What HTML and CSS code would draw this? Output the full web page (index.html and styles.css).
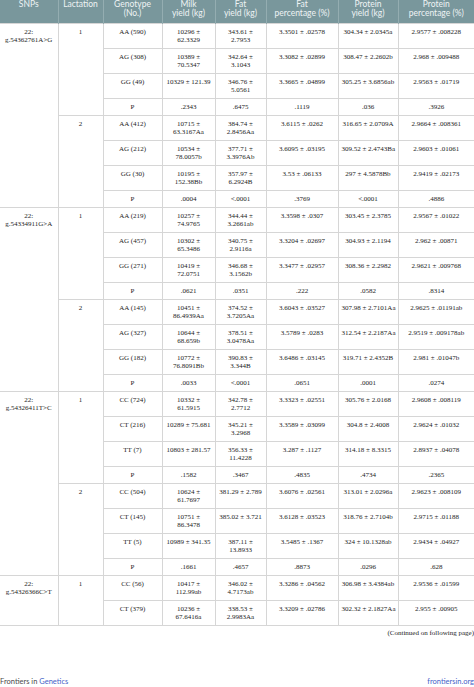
FILE: index.html
```html
<!DOCTYPE html>
<html>
<head>
<meta charset="utf-8">
<link rel="stylesheet" href="styles.css">
</head>
<body>
<div class="page">
<table class="tbl">
<colgroup>
<col class="c-snp"><col class="c-lac"><col class="c-gen"><col class="c-milk"><col class="c-fy"><col class="c-fp"><col class="c-py"><col class="c-pp">
</colgroup>
<thead>
<tr>
<th class="first">SNPs</th><th>Lactation</th><th>Genotype<br>(No.)</th><th>Milk<br>yield (kg)</th><th>Fat<br>yield (kg)</th><th>Fat<br>percentage (%)</th><th>Protein<br>yield (kg)</th><th class="last">Protein<br>percentage (%)</th>
</tr>
</thead>
<tbody>
<tr><td class="first" rowspan="8">22:<br>g.54362761A&gt;G</td><td rowspan="4">1</td><td>AA (590)</td><td>10296 ±<br>62.3329</td><td>343.61 ±<br>2.7953</td><td>3.3501 ± .02578</td><td>304.34 ± 2.0345a</td><td class="last">2.9577 ± .008228</td></tr>
<tr><td>AG (308)</td><td>10389 ±<br>70.5347</td><td>342.64 ±<br>3.1043</td><td>3.3082 ± .02899</td><td>308.47 ± 2.2602b</td><td class="last">2.968 ± .009488</td></tr>
<tr><td>GG (49)</td><td>10329 ± 121.39</td><td>346.76 ±<br>5.0561</td><td>3.3665 ± .04899</td><td>305.25 ± 3.6856ab</td><td class="last">2.9563 ± .01719</td></tr>
<tr class="p"><td>P</td><td>.2343</td><td>.6475</td><td>.1119</td><td>.036</td><td class="last">.3926</td></tr>
<tr><td rowspan="4">2</td><td>AA (412)</td><td>10715 ±<br>63.3167Aa</td><td>384.74 ±<br>2.8456Aa</td><td>3.6115 ± .0262</td><td>316.65 ± 2.0709A</td><td class="last">2.9664 ± .008361</td></tr>
<tr><td>AG (212)</td><td>10534 ±<br>78.0057b</td><td>377.71 ±<br>3.3976Ab</td><td>3.6095 ± .03195</td><td>309.52 ± 2.4743Ba</td><td class="last">2.9603 ± .01061</td></tr>
<tr><td>GG (30)</td><td>10195 ±<br>152.38Bb</td><td>357.97 ±<br>6.2924B</td><td>3.53 ± .06133</td><td>297 ± 4.5878Bb</td><td class="last">2.9419 ± .02173</td></tr>
<tr class="p"><td>P</td><td>.0004</td><td>&lt;.0001</td><td>.3769</td><td>&lt;.0001</td><td class="last">.4886</td></tr>

<tr><td class="first" rowspan="8">22:<br>g.54334911G&gt;A</td><td rowspan="4">1</td><td>AA (219)</td><td>10257 ±<br>74.9765</td><td>344.44 ±<br>3.2661ab</td><td>3.3598 ± .0307</td><td>303.45 ± 2.3785</td><td class="last">2.9567 ± .01022</td></tr>
<tr><td>AG (457)</td><td>10302 ±<br>65.3486</td><td>340.75 ±<br>2.9116a</td><td>3.3204 ± .02697</td><td>304.93 ± 2.1194</td><td class="last">2.962 ± .00871</td></tr>
<tr><td>GG (271)</td><td>10419 ±<br>72.0751</td><td>346.68 ±<br>3.1562b</td><td>3.3477 ± .02957</td><td>308.36 ± 2.2982</td><td class="last">2.9621 ± .009768</td></tr>
<tr class="p"><td>P</td><td>.0621</td><td>.0351</td><td>.222</td><td>.0582</td><td class="last">.8314</td></tr>
<tr><td rowspan="4">2</td><td>AA (145)</td><td>10451 ±<br>86.4939Aa</td><td>374.52 ±<br>3.7205Aa</td><td>3.6043 ± .03527</td><td>307.98 ± 2.7101Aa</td><td class="last">2.9625 ± .01191ab</td></tr>
<tr><td>AG (327)</td><td>10644 ±<br>68.659b</td><td>378.51 ±<br>3.0478Aa</td><td>3.5789 ± .0283</td><td>312.54 ± 2.2187Aa</td><td class="last">2.9519 ± .009178ab</td></tr>
<tr><td>GG (182)</td><td>10772 ±<br>76.8091Bb</td><td>390.83 ±<br>3.344B</td><td>3.6486 ± .03145</td><td>319.71 ± 2.4352B</td><td class="last">2.981 ± .01047b</td></tr>
<tr class="p"><td>P</td><td>.0033</td><td>&lt;.0001</td><td>.0651</td><td>.0001</td><td class="last">.0274</td></tr>

<tr><td class="first" rowspan="8">22:<br>g.54326411T&gt;C</td><td rowspan="4">1</td><td>CC (724)</td><td>10332 ±<br>61.5915</td><td>342.78 ±<br>2.7712</td><td>3.3323 ± .02551</td><td>305.76 ± 2.0168</td><td class="last">2.9608 ± .008119</td></tr>
<tr><td>CT (216)</td><td>10289 ± 75.681</td><td>345.21 ±<br>3.2968</td><td>3.3589 ± .03099</td><td>304.8 ± 2.4008</td><td class="last">2.9624 ± .01032</td></tr>
<tr><td>TT (7)</td><td>10803 ± 281.57</td><td>356.33 ±<br>11.4228</td><td>3.287 ± .1127</td><td>314.18 ± 8.3315</td><td class="last">2.8937 ± .04078</td></tr>
<tr class="p"><td>P</td><td>.1582</td><td>.3467</td><td>.4835</td><td>.4734</td><td class="last">.2365</td></tr>
<tr><td rowspan="4">2</td><td>CC (504)</td><td>10624 ±<br>61.7697</td><td>381.29 ± 2.789</td><td>3.6076 ± .02561</td><td>313.01 ± 2.0296a</td><td class="last">2.9623 ± .008109</td></tr>
<tr><td>CT (145)</td><td>10751 ±<br>86.3478</td><td>385.02 ± 3.721</td><td>3.6128 ± .03523</td><td>318.76 ± 2.7104b</td><td class="last">2.9715 ± .01188</td></tr>
<tr><td>TT (5)</td><td>10989 ± 341.35</td><td>387.11 ±<br>13.8933</td><td>3.5485 ± .1367</td><td>324 ± 10.1328ab</td><td class="last">2.9434 ± .04927</td></tr>
<tr class="p"><td>P</td><td>.1661</td><td>.4657</td><td>.8873</td><td>.0296</td><td class="last">.628</td></tr>

<tr><td class="first" rowspan="2">22:<br>g.54326366C&gt;T</td><td rowspan="2">1</td><td>CC (56)</td><td>10417 ±<br>112.99ab</td><td>346.02 ±<br>4.7173ab</td><td>3.3286 ± .04562</td><td>306.98 ± 3.4384ab</td><td class="last">2.9536 ± .01599</td></tr>
<tr><td>CT (379)</td><td>10236 ±<br>67.6416a</td><td>338.53 ±<br>2.9983Aa</td><td>3.3209 ± .02786</td><td>302.32 ± 2.1827Aa</td><td class="last">2.955 ± .00905</td></tr>
</tbody>
</table>
<div class="cont">(Continued on following page)</div>
<div class="footer">
<span class="journal">Frontiers in <span class="link">Genetics</span></span>
<span class="link">frontiersin.org</span>
</div>
</div>
</body>
</html>
```

FILE: styles.css
```css
html, body {
  margin: 0;
  padding: 0;
  background: #ffffff;
}
.page {
  width: 474px;
  height: 687px;
  display: flex;
  flex-direction: column;
  overflow: hidden;
}
.tbl {
  margin-top: -5px;
  width: 474px;
  table-layout: fixed;
  border-collapse: collapse;
  font-family: "Liberation Serif", "Times New Roman", serif;
  font-size: 7px;
  line-height: 8px;
  color: #1c1c1c;
}
.c-snp { width: 58px; }
.c-lac { width: 45px; }
.c-gen { width: 59px; }
.c-milk { width: 53px; }
.c-fy { width: 51px; }
.c-fp { width: 72px; }
.c-py { width: 60px; }
.c-pp { width: 76px; }
.tbl th {
  background: #79979c;
  color: #eef3f4;
  font-family: Lato, "Liberation Sans", sans-serif;
  font-weight: normal;
  font-size: 8.5px;
  line-height: 9.5px;
  padding: 4.5px 2px 4.5px;
  vertical-align: top;
  text-align: center;
  border-left: 1px solid #94adb1;
  border-right: 1px solid #94adb1;
  white-space: nowrap;
}
.tbl td {
  border: 1px solid #d6d6d6;
  padding: 4px 3px 4px;
  text-align: center;
  vertical-align: top;
  white-space: nowrap;
}
.tbl .first { border-left: none; }
.tbl .last { border-right: none; }
.cont {
  margin-top: 3px;
  text-align: right;
  font-family: "Liberation Serif", "Times New Roman", serif;
  font-size: 7px;
  line-height: 8px;
  color: #1c1c1c;
}
.footer {
  margin-top: auto;
  display: flex;
  justify-content: space-between;
  align-items: flex-end;
  font-family: Lato, "Liberation Sans", sans-serif;
  font-size: 7.5px;
  line-height: 10px;
}
.journal { color: #4a4a4a; }
.link { color: #3f62c8; }
```
